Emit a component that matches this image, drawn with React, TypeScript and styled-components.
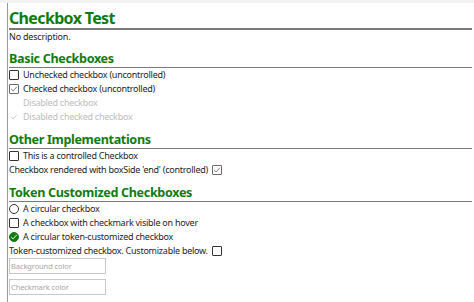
import React from 'react';
import styled, {createGlobalStyle} from "styled-components";

const GlobalStyle = createGlobalStyle`
  html, body {
    margin: 0;
    padding: 0;
    background: #ffffff;
  }
  body {
    font-family: "Noto Sans", "Open Sans", sans-serif;
    color: #242424;
  }
`

type BoxProps = { $shape?: 'square' | 'circle'; $state?: 'unchecked' | 'checked' | 'disabled' | 'disabledChecked' | 'filled' }

const Check = ({color}: { color: string }) => (
    <svg width="8" height="8" viewBox="0 0 8 8">
        <path d="M1.4 4.2 L3.1 5.9 L6.6 2.1" fill="none" stroke={color} strokeWidth="0.9" strokeLinecap="round" strokeLinejoin="round"/>
    </svg>
)

const CheckBox = ({$shape = 'square', $state = 'unchecked'}: BoxProps) => {
    const mark = $state === 'checked' ? '#6b6b6b'
        : $state === 'disabledChecked' ? '#c4c4c4'
            : $state === 'filled' ? '#ffffff' : null;
    return (
        <Box $shape={$shape} $state={$state}>
            {mark && <Check color={mark}/>}
        </Box>
    )
}

export default function App() {
    return (
        <>
            <GlobalStyle/>
            <TopStrip/>
            <Page>
                <Title>Checkbox Test</Title>
                <Description>No description.</Description>

                <Section>
                    <SectionTitle>Basic Checkboxes</SectionTitle>
                    <List>
                        <Row><CheckBox/><Label>Unchecked checkbox (uncontrolled)</Label></Row>
                        <Row><CheckBox $state={'checked'}/><Label>Checked checkbox (uncontrolled)</Label></Row>
                        <Row><CheckBox $state={'disabled'}/><Label $disabled>Disabled checkbox</Label></Row>
                        <Row><CheckBox $state={'disabledChecked'}/><Label $disabled>Disabled checked checkbox</Label></Row>
                    </List>
                </Section>

                <Section>
                    <SectionTitle>Other Implementations</SectionTitle>
                    <List>
                        <Row><CheckBox/><Label>This is a controlled Checkbox</Label></Row>
                        <Row $reverse><CheckBox $state={'checked'}/><Label>Checkbox rendered with boxSide 'end' (controlled)</Label></Row>
                    </List>
                </Section>

                <Section>
                    <SectionTitle>Token Customized Checkboxes</SectionTitle>
                    <List>
                        <Row><CheckBox $shape={'circle'}/><Label>A circular checkbox</Label></Row>
                        <Row><CheckBox/><Label>A checkbox with checkmark visible on hover</Label></Row>
                        <Row><CheckBox $shape={'circle'} $state={'filled'}/><Label>A circular token-customized checkbox</Label></Row>
                        <Row $reverse><CheckBox/><Label>Token-customized checkbox. Customizable below.</Label></Row>
                    </List>
                    <Inputs>
                        <TextInput placeholder={'Background color'}/>
                        <TextInput placeholder={'Checkmark color'}/>
                    </Inputs>
                </Section>
            </Page>
        </>
    );
}

const TopStrip = styled.div`
  height: 3px;
  background-color: #f2f2f2;
`
const Page = styled.main`
  margin-left: 7px;
  border-left: 1px solid #9a9a9a;
  min-height: 299px;
  padding: 6px 2px 0 1px;
  box-sizing: border-box;
`
const Title = styled.h1`
  margin: 0;
  font-size: 16px;
  font-weight: 700;
  letter-spacing: -0.65px;
  line-height: 19px;
  color: #107c10;
  border-bottom: 2px solid #7a7a7a;
`
const Description = styled.p`
  margin: 0;
  font-size: 9px;
  letter-spacing: -0.2px;
  line-height: 13px;
`
const Section = styled.section`
  margin-top: 7px;
`
const SectionTitle = styled.h2`
  margin: 0;
  font-size: 12.6px;
  font-weight: 700;
  letter-spacing: -0.35px;
  line-height: 17px;
  color: #107c10;
  border-bottom: 1px solid #7a7a7a;
`
const List = styled.div`
  display: flex;
  flex-direction: column;
`
const Row = styled.div<{ $reverse?: boolean }>`
  display: flex;
  flex-direction: ${props => props.$reverse ? 'row-reverse' : 'row'};
  align-items: center;
  gap: 4px;
  height: 14px;
  ${props => props.$reverse && 'width: max-content;'}
`
const Label = styled.span<{ $disabled?: boolean }>`
  font-size: 9px;
  letter-spacing: -0.25px;
  line-height: 14px;
  color: ${props => props.$disabled ? '#bdbdbd' : '#242424'};
`
const Box = styled.span<BoxProps>`
  box-sizing: border-box;
  width: 10px;
  height: 10px;
  display: flex;
  align-items: center;
  justify-content: center;
  border-radius: ${props => props.$shape === 'circle' ? '50%' : '1px'};
  border: 1px solid ${props =>
          props.$state === 'disabled' || props.$state === 'disabledChecked' ? 'transparent'
                  : props.$state === 'filled' ? '#107c10'
                          : props.$state === 'checked' ? '#6b6b6b' : '#333333'};
  background-color: ${props => props.$state === 'filled' ? '#107c10' : 'transparent'};
`
const Inputs = styled.div`
  display: flex;
  flex-direction: column;
  gap: 5px;
`
const TextInput = styled.input`
  box-sizing: border-box;
  width: 97px;
  height: 16px;
  margin: 0;
  padding: 0 1px;
  border: 1px solid #c8c8c8;
  font-family: "Noto Sans", sans-serif;
  font-size: 7.5px;
  letter-spacing: -0.1px;
  outline: none;

  &::placeholder {
    color: #a6a6a6;
  }
`
